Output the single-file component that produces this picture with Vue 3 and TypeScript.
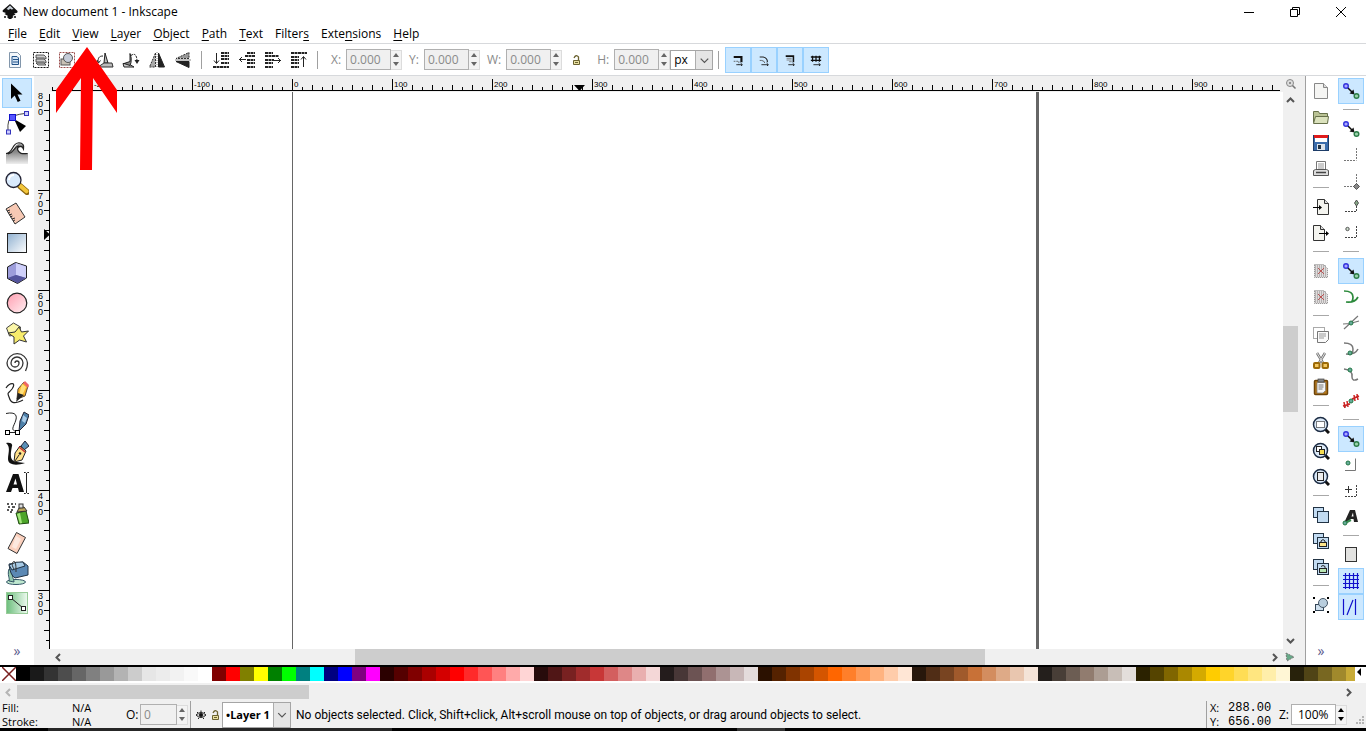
<script setup lang="ts">
import { computed, onBeforeUnmount, onMounted, ref } from 'vue'

interface Item { name: string; svg: string; on?: boolean }
type Entry = Item | null

const menus: [string, string, string][] = [
  ['', 'F', 'ile'], ['', 'E', 'dit'], ['', 'V', 'iew'], ['', 'L', 'ayer'], ['', 'O', 'bject'],
  ['', 'P', 'ath'], ['', 'T', 'ext'], ['Filter', 's', ''], ['Exte', 'n', 'sions'], ['', 'H', 'elp'],
]

const bars = (rows: number[][]) => rows.map(([x, y, w]) => `<path d="M${x} ${y}h${w}" stroke="#222" stroke-width="2" stroke-dasharray="3 .5"/>`).join('')

const toolbar: Entry[] = [
  { name: 'Select all', svg: '<path d="M3.500 1.500h8l3 3v12h-11z" fill="#f4f8fc" stroke="#8296ab"/><path d="M6 5.500h5l1.500 1.500v6.500h-6.500z" fill="#d5e5f5" stroke="#235389"/><path d="M7 8.500h5M7 11h5" stroke="#235389"/>' },
  { name: 'Select all in all layers', svg: '<rect x="1.500" y="1.500" width="15" height="15" fill="none" stroke="#111" stroke-dasharray="2 1"/><path d="M4 4h8l2 2v2l-2-1h-8zM4 8h8l2 2v2l-2-1h-8zM4 12h8l2 2h-8z" fill="#ccc" stroke="#333" stroke-width=".8"/>' },
  { name: 'Deselect', svg: '<rect x="1.500" y="1.500" width="15" height="15" fill="none" stroke="#9b4d4d" stroke-dasharray="2 1"/><rect x="3" y="8" width="9" height="6" fill="#c8c1b6" stroke="#555"/><circle cx="10" cy="7" r="4.500" fill="#c5ccd9" stroke="#555"/>' },
  null,
  { name: 'Rotate left', svg: '<path d="M8 12l1-10 3 10z" fill="#bbb" stroke="#222"/><path d="M2 16l6-4h8l1 4z" fill="#bbb" stroke="#333"/><path d="M2 11c0-4 1-6 5-6M1 9l1.500 3 2-2.500" fill="none" stroke="#222"/>' },
  { name: 'Rotate right', svg: '<path d="M1 12.500h5l6 3.500h-10z" fill="#ccc" stroke="#222"/><path d="M2 12.500l6-2v-8q2 5 1 9l-1 3z" fill="#888" stroke="#222"/><path d="M9 4.500c4-3 6 0 6 6" fill="none" stroke="#222" stroke-dasharray="2 1"/><path d="M12.500 9l2.500 4 2.500-4z" fill="#222"/>' },
  { name: 'Flip horizontal', svg: '<path d="M7.500 2v14h-6z" fill="#aaa" stroke="#333" stroke-dasharray="2 1"/><path d="M10.500 2v14h6z" fill="#222" stroke="#222"/><path d="M9 1v16" stroke="#888" stroke-dasharray="1 1"/>' },
  { name: 'Flip vertical', svg: '<path d="M15 1.500v6h-13z" fill="#999" stroke="#333" stroke-dasharray="2 1"/><path d="M15 16.500v-6h-13z" fill="#222" stroke="#222"/><path d="M1 9h16" stroke="#888"/>' },
  null,
  { name: 'Lower to bottom', svg: bars([[9, 2, 8], [9, 5, 8], [9, 8, 8], [9, 12, 8], [1, 16, 16]]) + '<path d="M4.500 2v10M2 9.500l2.500 3 2.500-3" fill="none" stroke="#222"/>' },
  { name: 'Lower', svg: bars([[9, 2, 8], [7, 5, 10], [9, 9, 8], [9, 12, 8], [9, 16, 8]]) + '<path d="M1 8.500h7M4 6l-2.500 2.500 2.500 2.500" fill="none" stroke="#222"/>' },
  { name: 'Raise', svg: bars([[1, 2, 8], [1, 5, 14], [1, 9, 9], [1, 12, 8], [1, 16, 8]]) + '<path d="M10 9.500h7M14 7l2.500 2.500-2.500 2.500" fill="none" stroke="#222"/>' },
  { name: 'Raise to top', svg: bars([[1, 2, 16], [1, 6, 8], [1, 9, 8], [1, 12, 8], [1, 16, 8]]) + '<path d="M13.500 16v-10M11 8.500l2.500-3 2.500 3" fill="none" stroke="#222"/>' },
  null,
]

const affect: Item[] = [
  { name: 'Scale stroke width', svg: '<path d="M2 3.500h9v6" fill="none" stroke="#111" stroke-width="2.500"/><path d="M2 8.500h6v4" fill="none" stroke="#555" stroke-dasharray="2 1"/><path d="M5 12.500h7M10 10.500l2 2-2 2" fill="none" stroke="#111"/>' },
  { name: 'Scale rounded corners', svg: '<path d="M2 3.500h4q5 1 5 6" fill="none" stroke="#222" stroke-width="1.300"/><path d="M2 7.500h2q3 0 4 3" fill="none" stroke="#555"/><path d="M4 12.500h8M10 10.500l2 2-2 2" fill="none" stroke="#111"/>' },
  { name: 'Move gradients', svg: '<path d="M2 2.500h9v7" fill="none" stroke="#111" stroke-width="1.800"/><path d="M3 5h6M3 7h6M6 9h3" stroke="#777"/><path d="M5 12.500h7M10 10.500l2 2-2 2" fill="none" stroke="#111"/>' },
  { name: 'Move patterns', svg: '<path d="M1 3.500h12M1 7.500h12" stroke="#111" stroke-width="1.500"/><path d="M3 2v7M7 2v7M11 2v7" stroke="#111" stroke-width="1.500"/><path d="M4 12.500h8M10 10.500l2 2-2 2" fill="none" stroke="#111"/>' },
]

const tools: Item[] = [
  { name: 'Select', on: true, svg: '<path d="M6 2.500v15.500l3.700-3.500 3 6.500 2.800-1.300-3-6.300h5z" fill="#000"/>' },
  { name: 'Edit paths by nodes', svg: '<path d="M3 20q-1-13 5-15t15-3" fill="none" stroke="#444"/><path d="M9 8l6 13 6-6z" fill="#000"/><rect x="4.500" y="3.500" width="6" height="6" fill="#55f" stroke="#11c"/><rect x="1.500" y="19" width="4" height="4" fill="#ccf" stroke="#33b"/><rect x="19.500" y="0.500" width="4" height="4" fill="#ccf" stroke="#33b"/>' },
  { name: 'Tweak objects', svg: '<defs><linearGradient id="wv" x2="0" y2="1"><stop offset=".4" stop-color="#888"/><stop offset="1" stop-color="#eee"/></linearGradient></defs><path d="M1 12h5c3-2 3-8 8-9 5 0 6 3 4 5-1-3-6-2-5 1 0 3 4 4 10 3v11h-22z" fill="url(#wv)"/><path d="M1 12.500c7 0 6-10 12-10.500 5-.5 6.500 3 5.500 6-1-4-6-3-6 0 1 5 5 5 10 4.500M3 13c6-1 6-8 11-8" fill="none" stroke="#222" stroke-width="1.200"/>' },
  { name: 'Zoom', svg: '<path d="M15 15l7 6" stroke="#8a6510" stroke-width="6" stroke-linecap="round"/><path d="M15.500 15l6 5.300" stroke="#f3c63b" stroke-width="4" stroke-linecap="round"/><circle cx="8.500" cy="9" r="7.500" fill="#d9eafc" stroke="#223" stroke-width="1.300"/><path d="M4 9a5 5 0 0 1 5-5" fill="none" stroke="#fff" stroke-width="2"/>' },
  { name: 'Measure', svg: '<path d="M1 8l10-6 9 14-10 7z" fill="#f7c9b4" stroke="#333"/><path d="M2 10l3-1M3 12l2-1M4 14l3-1M5.500 16l2-1M7 18l3-1M8 20l2-1" stroke="#333"/>' },
  { name: 'Rectangle', svg: '<defs><linearGradient id="rc" x2="1" y2="1"><stop stop-color="#8fb0d0"/><stop offset="1" stop-color="#fff"/></linearGradient></defs><rect x="2.500" y="2.500" width="19" height="19" fill="url(#rc)" stroke="#222"/>' },
  { name: '3D box', svg: '<path d="M2.500 6l8-4.500 11 3.500v12l-9 5.500-10-5z" fill="#7272ba" stroke="#222"/><path d="M3 6.500l8-4.500v12l-8 3z" fill="#9d9ddb"/><path d="M11 2l10 3.500v11.500l-10-3z" fill="#cfd0fa"/><path d="M3 17l8-3 10 3-8.500 5z" fill="#54549d"/>' },
  { name: 'Ellipse', svg: '<defs><linearGradient id="el" x2="1" y2="1"><stop stop-color="#ff9db0"/><stop offset="1" stop-color="#fff0f2"/></linearGradient></defs><circle cx="12" cy="12" r="9.800" fill="url(#el)" stroke="#222" stroke-width="1.200"/>' },
  { name: 'Star', svg: '<path d="M1.500 7l7-5 7 4-1 7-10 2z" fill="#fbf6a8" stroke="#444"/><path d="M14 6l2.500 5 7-1-5 5 3 6-7-2-5.500 4v-7l-6-4 7-1z" fill="#f8ec6c" stroke="#333"/>' },
  { name: 'Spiral', svg: '<path d="M10 12a2 2 0 0 1 4 0a4 4 0 0 1-8 0a6 6 0 0 1 12 0a8 8 0 0 1-16 0a10.300 10.300 0 0 1 20.500 0q0 4-2 8" fill="none" stroke="#333" stroke-width="1.300"/>' },
  { name: 'Pencil', svg: '<path d="M1 7c4-6 11-6 6 1-4 5-5 3-3 8 2 7 6 7 14 3" fill="none" stroke="#222" stroke-width="1.200"/><path d="M13 8l6-7 4 4-3 10-8 3z" fill="#f9b52a" stroke="#543"/><path d="M17 3l4 3-4 9-3-1z" fill="#ffe07a"/><path d="M13 12l6 2-8 7z" fill="#222"/><path d="M18 2l2-2 4 4-1 3z" fill="#e66"/>' },
  { name: 'Bezier', svg: '<path d="M1 2.500c10-2 12 2 9 9s-4 8 4 9.500M3 21.500h9" fill="none" stroke="#222"/><path d="M15 10l4-9 5 3-3 9-7 7z" fill="#4d7fa8" stroke="#223"/><path d="M18 4l4 3-2 5-3-2z" fill="#a8cbe8"/><rect x=".5" y="19.500" width="4" height="4" fill="#fff" stroke="#000"/><rect x="10.500" y="19.500" width="4" height="4" fill="#fff" stroke="#000"/>' },
  { name: 'Calligraphy', svg: '<path d="M1 2c3-1 7 0 6 3-2 10-2 15 5 16l8 1c-9 3-17 2-17-4s3-12-2-16z" fill="#111"/><path d="M20 0l4 5-5 4-3-4z" fill="#5a90b8" stroke="#223"/><path d="M15 5l6 5-4 9-8 2 1-9z" fill="#ffe08a" stroke="#222"/><path d="M10 20l4-6" stroke="#222"/><circle cx="15" cy="12.500" r="1.300" fill="#222"/><path d="M14 6l6 5" stroke="#c33" stroke-width="1.500"/>' },
  { name: 'Text', svg: '<path d="M8 3h5.500l5.500 18h-5l-1-4h-5.500l-1.500 4h-5zM8.500 13.500h3.500l-1.500-6z" fill="#111"/><path d="M19 1.500h1.500l1 1 1-1h1.500M19 22.500h1.500l1-1 1 1h1.500M21.500 2v20" fill="none" stroke="#222"/>' },
  { name: 'Spray', svg: '<path d="M11 12l10-2 3 12-10 1z" fill="#4da52a" stroke="#1e4a10"/><path d="M12 13l3-1 2 10-2 .5z" fill="#a5e87d"/><path d="M12 11l2-4 5-1 3 4z" fill="#bda35a" stroke="#333"/><rect x="14" y="3" width="4" height="4" fill="#ddd" stroke="#333"/><path d="M2 3h2M6 3h2M3 6h2M7 6h3M2 9h2M6 9h2M10 3h1M5 11h2" stroke="#222" stroke-width="1.700"/>' },
  { name: 'Eraser', svg: '<path d="M11.500 1.500l9 5-8.500 16-9-5z" fill="#fbd0bd" stroke="#333"/><path d="M11 5l5 3-5 10-4-2z" fill="#fde8de"/>' },
  { name: 'Paint bucket', svg: '<ellipse cx="11" cy="21" rx="9.500" ry="2.500" fill="#bfe8cf" stroke="#356"/><path d="M4 8c-2 6 1 9 0 12l5 1c0-3-3-6-1-11z" fill="#93c8ad" stroke="#356"/><path d="M4 3l14-2 5 4v9l-13 3q-5-3-6-14z" fill="#5b88b4" stroke="#234"/><path d="M4 4q7-4 14-3l2 4-13 4z" fill="#a8cbe6" stroke="#234"/><path d="M9 8c-4-6 0-9 1-7s1 6 1 10" fill="none" stroke="#333"/>' },
  { name: 'Gradient', svg: '<defs><linearGradient id="gr" x2="1"><stop stop-color="#6cbe7c"/><stop offset="1" stop-color="#eefaf0"/></linearGradient></defs><rect x="1.500" y="1.500" width="21" height="21" fill="url(#gr)" stroke="#9c9"/><path d="M6 7l12 10" stroke="#222"/><rect x="3.500" y="4.500" width="4" height="4" fill="#fff" stroke="#222"/><rect x="16.500" y="15.500" width="4" height="4" fill="#fff" stroke="#222"/>' },
]

const lens = (inner: string) => `<path d="M13 13l4 4" stroke="#111" stroke-width="3"/><circle cx="8.500" cy="8.500" r="7" fill="#dbe9f8" stroke="#1c2c44" stroke-width="1.500"/>${inner}`
const pair = (inner: string) => `<rect x="1.500" y="1.500" width="10" height="10" fill="#c3dcf3" stroke="#234"/><rect x="5.500" y="5.500" width="11" height="11" fill="#c2dbf1" stroke="#234"/>${inner}`
const greyed = '<path d="M2.500 2.500h9l4 4v9h-13z" fill="#e0dcdc" stroke="#888" stroke-dasharray="1 1"/><path d="M3 4h11M3 6h12M3 8h12M3 10h12M3 12h12M3 14h12" stroke="#888" stroke-dasharray="1 1"/><path d="M6 6l6 6M12 6l-6 6" stroke="#b55"/>'

const commands: Entry[] = [
  { name: 'New', svg: '<path d="M2.500 1.500h9l4 4v11h-13z" fill="#f5f5f3" stroke="#888"/><path d="M11.500 1.500v4h4" fill="#ddd" stroke="#888"/>' },
  { name: 'Open', svg: '<path d="M1.500 14.500v-11h5l1 2h8v9z" fill="#b9c294" stroke="#66704a"/><path d="M1.500 15.500l2-7h13l-1 7z" fill="#dbe2bd" stroke="#66704a"/>' },
  { name: 'Save', svg: '<rect x="1.500" y="1.500" width="15" height="15" fill="#3b6cab" stroke="#1d3c68"/><rect x="3" y="2" width="12" height="6" fill="#fff"/><rect x="2" y="1" width="14" height="3" fill="#e01b1b"/><rect x="5" y="10" width="8" height="6" fill="#dde3ea"/><rect x="6" y="11" width="3" height="4" fill="#234"/>' },
  { name: 'Print', svg: '<path d="M4.500 9.500v-8h9v8" fill="#fff" stroke="#777"/><path d="M6 4h6M6 6h6M6 8h6" stroke="#999"/><path d="M1.500 10.500l2-1h11l2 1v5h-15z" fill="#ddd" stroke="#555"/><path d="M4 12.500h10" stroke="#444" stroke-width="1.500"/>' },
  null,
  { name: 'Import', svg: '<path d="M5.500 1.500h7l4 4v11h-11z" fill="#f4f4ef" stroke="#333"/><path d="M12.500 1.500v4h4" fill="#ddd" stroke="#333"/><path d="M1 9.500h8" stroke="#000"/><path d="M7 7l3 2.500-3 2.500z" fill="#000"/>' },
  { name: 'Export', svg: '<path d="M1.500 1.500h7l4 4v11h-11z" fill="#f4f4ef" stroke="#333"/><path d="M8.500 1.500v4h4" fill="#ddd" stroke="#333"/><path d="M7 9.500h8" stroke="#000"/><path d="M14 7l3 2.500-3 2.500z" fill="#000"/>' },
  null,
  { name: 'Undo', svg: greyed },
  { name: 'Redo', svg: greyed },
  null,
  { name: 'Copy', svg: '<rect x="1.500" y="1.500" width="11" height="11" fill="#fff" stroke="#aaa"/><path d="M5.500 5.500h11v8l-3 3h-8z" fill="#fafafa" stroke="#777"/><path d="M7 8h7M7 10h7M7 12h5" stroke="#999"/>' },
  { name: 'Cut', svg: '<path d="M5 1l6 10M13 1l-6 10" stroke="#777" stroke-width="2.500"/><path d="M5 1l6 10M13 1l-6 10" stroke="#ddd"/><rect x="2" y="11" width="5.500" height="5" rx="1" fill="#f4c860" stroke="#9c6a08" stroke-width="2"/><rect x="10.500" y="11" width="5.500" height="5" rx="1" fill="#f4c860" stroke="#9c6a08" stroke-width="2"/>' },
  { name: 'Paste', svg: '<rect x="2.500" y="2.500" width="13" height="14" rx="1" fill="#b77a1e" stroke="#6d4308" stroke-width="1.500"/><path d="M5 4.500h8.500v8l-2.500 2.500h-6z" fill="#f6f6f6" stroke="#777" stroke-width=".7"/><rect x="6" y="1" width="6" height="3" fill="#888" stroke="#444" stroke-width=".7"/><path d="M6.500 7h5M6.500 9h5M6.500 11h4" stroke="#777"/>' },
  null,
  { name: 'Zoom selection', svg: lens('<rect x="4.500" y="5.500" width="8" height="6" fill="#fff" stroke="#000" stroke-dasharray="1 1"/>') },
  { name: 'Zoom drawing', svg: lens('<rect x="4.500" y="4.500" width="5" height="5" fill="#fff" stroke="#222"/><rect x="7.500" y="7.500" width="5" height="5" fill="#f4dc50" stroke="#222"/>') },
  { name: 'Zoom page', svg: lens('<rect x="5.500" y="4.500" width="6" height="8" fill="#eee" stroke="#222"/>') },
  null,
  { name: 'Duplicate', svg: pair('') },
  { name: 'Clone', svg: pair('<rect x="7.500" y="10.500" width="7" height="4" fill="#ffe68a" stroke="#222"/><path d="M9 10v-1q2-3 4 0v1" fill="none" stroke="#222"/>') },
  { name: 'Unlink clone', svg: pair('<rect x="7.500" y="10.500" width="7" height="4" fill="#b8e6b4" stroke="#222"/><path d="M9 8.500q2-2 4 0v2" fill="none" stroke="#222"/>') },
  null,
  { name: 'Group', svg: '<path d="M1 1h2v2h-2zM15 1h2v2h-2zM1 15h2v2h-2zM15 15h2v2h-2z" fill="#000"/><rect x="3.500" y="8.500" width="8" height="6" fill="#cfe0ee" stroke="#345"/><circle cx="11" cy="7" r="4.500" fill="#b9cede" stroke="#456"/>' },
]

const main = '<path d="M5 5l6 6" stroke="#111" stroke-width="1.500"/><path d="M12.500 12.500l-5-1 4-4z" fill="#111"/><circle cx="4" cy="4" r="2.300" fill="#aaf" stroke="#33d" stroke-width="1.400"/><circle cx="14.500" cy="14" r="2.300" fill="#9cd4ac" stroke="#2c7c48" stroke-width="1.400"/>'
const corner = '<path d="M2 14.500h12.500M14.500 2v12" fill="none" stroke="#777" stroke-dasharray="2 1"/>'
const dot = (x: number, y: number) => `<circle cx="${x}" cy="${y}" r="2" fill="#6a9" stroke="#274" stroke-width="1"/>`
const curve = '<path d="M2 3q9 1 8 8 0 5 6 2" fill="none" stroke="#777" stroke-width="1.500"/>'

const snaps: Entry[] = [
  { name: 'Enable snapping', on: true, svg: main },
  null,
  { name: 'Snap bounding boxes', svg: main },
  { name: 'Snap to edges', svg: corner },
  { name: 'Snap to corners', svg: corner + '<path d="M14.500 11.500l3 3-3 3-3-3z" fill="#888" stroke="#555"/>' },
  { name: 'Snap edge midpoints', svg: '<path d="M3 13.500h11.500v-12" fill="none" stroke="#444" stroke-dasharray="2 1"/><path d="M14.500 2l2 3-2 3-2-3z" fill="#8a8" stroke="#555"/>' },
  { name: 'Snap centers', svg: '<path d="M3 13.500h11.500v-12" fill="none" stroke="#444" stroke-dasharray="2 1"/><circle cx="5.500" cy="5" r="1.700" fill="#cdc" stroke="#555"/>' },
  null,
  { name: 'Snap nodes', on: true, svg: main },
  { name: 'Snap to paths', svg: '<path d="M2 3q9 0 9 6t-4 5M4 14q9 1 12-5" fill="none" stroke="#2c8a3c" stroke-width="1.700"/>' },
  { name: 'Snap intersections', svg: '<path d="M2 15l14-13M1 10q8 0 16-3" fill="none" stroke="#777" stroke-width="1.200"/>' + dot(9, 9) },
  { name: 'Snap cusp nodes', svg: '<path d="M2 3q9 0 9 6t-4 5M4 14q9 1 12-5" fill="none" stroke="#777" stroke-width="1.500"/>' + dot(8, 13) },
  { name: 'Snap smooth nodes', svg: curve + dot(8, 4) },
  { name: 'Snap line midpoints', svg: '<path d="M2 16l14-13" stroke="#777"/><path d="M2 10l1 6M5 9l1 6M12 3l1 6M15 2l1 6M1 14l7-2M10 7l7-3" stroke="#c22" stroke-width="1.500"/>' + dot(9, 9) },
  null,
  { name: 'Snap other points', on: true, svg: main },
  { name: 'Snap object centers', svg: '<path d="M3 14.500h10.500v-12" fill="none" stroke="#777"/>' + dot(6, 7) },
  { name: 'Snap rotation centers', svg: '<path d="M3 14.500h11.500v-12" fill="none" stroke="#444" stroke-dasharray="2 1"/><path d="M6.500 4v7M3 7.500h7" stroke="#333"/>' },
  { name: 'Snap text baseline', svg: '<path d="M8 2h5l3 12h-4l-.5-3h-3l-2 3h-4zM9.500 8.500h2l-.5-4z" fill="#222"/><path d="M3 15l6-3" stroke="#3a8a50" stroke-width="2"/>' + dot(3, 15) },
  null,
  { name: 'Snap page border', svg: '<rect x="3.500" y="1.500" width="11" height="14" fill="#e2e2e0" stroke="#333"/>' },
  { name: 'Snap to grids', on: true, svg: '<path d="M1 3.500h16M1 7.500h16M1 11.500h16M1 15.500h16M3.500 1v16M7.500 1v16M11.500 1v16M15.500 1v16" stroke="#11c" stroke-width="1.200"/>' },
  { name: 'Snap guides', on: true, svg: '<path d="M1.500 1v16M13.500 1v16M5 17l6-15" stroke="#11c" stroke-width="1.200"/>' },
]

const palette = (
  '000000 1a1a1a 333333 4d4d4d 666666 808080 999999 b3b3b3 cccccc e6e6e6 ececec f2f2f2 f9f9f9 ffffff ' +
  '800000 ff0000 808000 ffff00 008000 00ff00 008080 00ffff 000080 0000ff 800080 ff00ff ' +
  '2b0000 550000 800000 aa0000 d40000 ff0000 ff2a2a ff5555 ff8080 ffaaaa ffd5d5 ' +
  '280b0b 501616 782121 a02c2c c83737 d35f5f de8787 e9afaf f4d7d7 ' +
  '241c1c 483737 6c5353 916f6f ac9393 c8b7b7 e3dbdb ' +
  '2b1100 552200 803300 aa4400 d45500 ff6600 ff7f2a ff9955 ffb380 ffccaa ffe6d5 ' +
  '28170b 502d16 784421 a05a2c c87137 d38d5f deaa87 e9c6af f4e3d7 ' +
  '241f1c 483e37 6c5d53 917c6f ac9d93 c8beb7 e3dedb ' +
  '2b2200 554400 806600 aa8800 d4aa00 ffcc00 ffd42a ffdd55 ffe680 ffeeaa fff6d5 ' +
  '28220b 504416 786721 a0892c c8ab37'
).split(' ')

const ORIGIN_X = 242
const ORIGIN_Y = 798
const winW = ref(window.innerWidth)
const winH = ref(window.innerHeight)
const measure = () => {
  winW.value = window.innerWidth
  winH.value = window.innerHeight
}
onMounted(() => window.addEventListener('resize', measure))
onBeforeUnmount(() => window.removeEventListener('resize', measure))

const range = (from: number, to: number) => Array.from({ length: Math.max(0, Math.floor((to - from) / 10) + 1) }, (_, i) => from + i * 10)
const hTicks = computed(() => range(-230, winW.value - 136 - ORIGIN_X))
const vTicks = computed(() => range(0, winH.value - 180).map((d) => 800 - d).filter((v) => ORIGIN_Y - v < winH.value - 180))
const tick = (v: number) => (v % 100 === 0 ? 11 : v % 20 === 0 ? 5 : 3)
const digits = (v: number) => String(Math.abs(v)).split('')

const coords = ref([
  { label: 'X:', value: '0.000' }, { label: 'Y:', value: '0.000' },
  { label: 'W:', value: '0.000' }, { label: 'H:', value: '0.000' },
])
const opacity = ref('0')
const zoom = ref('100%')
const lock = '<path d="M3.500 6.500h6v4h-6z" fill="#e8dfa0" stroke="#6b6230"/><path d="M4 4q2-4 4.500-1v3" fill="none" stroke="#6b6230" stroke-width="1.300"/><path d="M5 8.500h3" stroke="#6b6230"/>'
</script>

<template>
  <div class="window">
    <header class="titlebar">
      <svg class="logo" width="16" height="16" viewBox="0 0 16 16">
        <path d="M8 0l7.500 7q.5 1.500-1 2l-2.500.5 1.500 1-3 1.500 1 1-2.500 2h-2l-2-2 1-1-3.500-2 1.500-1-3-1q-1-1 0-2z" fill="#111" />
        <path d="M8 1.500l3.500 3.500-2 .5-1.500-1-1 1.500-2.500-1z" fill="#ccd4dc" />
        <path d="M2 13h2M12 13h2" stroke="#111" stroke-width="1.500" />
      </svg>
      <h1>New document 1 - Inkscape</h1>
      <div class="winbtns">
        <button type="button" aria-label="Minimize"><svg width="12" height="12"><path d="M1 6.500h10" stroke="#000" /></svg></button>
        <button type="button" aria-label="Restore"><svg width="12" height="12"><path d="M1.500 3.500h7v7h-7zM3.500 3v-1.500h7v7h-2" fill="none" stroke="#000" /></svg></button>
        <button type="button" aria-label="Close"><svg width="12" height="12"><path d="M1 1l10 10M11 1l-10 10" stroke="#000" /></svg></button>
      </div>
    </header>

    <nav class="menubar">
      <button v-for="m in menus" :key="m.join('')" type="button">{{ m[0] }}<u>{{ m[1] }}</u>{{ m[2] }}</button>
    </nav>

    <div class="toolbar">
      <template v-for="(t, i) in toolbar" :key="i">
        <button v-if="t" type="button" class="cell" :aria-label="t.name"><svg width="18" height="18" viewBox="0 0 18 18" v-html="t.svg" /></button>
        <span v-else class="vsep" />
      </template>
      <template v-for="(c, i) in coords" :key="c.label">
        <svg v-if="i === 3" class="lock" width="13" height="12" viewBox="0 0 13 12" v-html="lock" />
        <label class="field">
          <span>{{ c.label }}</span>
          <input v-model="c.value" disabled>
          <i class="spin"><b class="up" /><b class="down" /></i>
        </label>
      </template>
      <span class="drop unit">
        <select aria-label="Unit"><option>px</option></select>
        <svg width="17" height="18" viewBox="0 0 17 18"><path d="M5 7.500l4 4 4-4" fill="none" stroke="#555" stroke-width="1.300" /></svg>
      </span>
      <span class="vsep" />
      <button v-for="a in affect" :key="a.name" type="button" class="cell on" :aria-label="a.name"><svg width="12" height="12" viewBox="0 0 14 14" v-html="a.svg" /></button>
    </div>

    <main class="body">
      <aside class="tools">
        <button v-for="t in tools" :key="t.name" type="button" :class="{ on: t.on }" :aria-label="t.name"><svg width="24" height="24" viewBox="0 0 24 24" v-html="t.svg" /></button>
        <button type="button" class="more" aria-label="More tools">»</button>
      </aside>

      <section class="work">
        <div class="corner" />
        <svg class="hruler">
          <path d="M2.500 11v4" stroke="#000" />
          <line x1="2" y1="14.500" x2="100%" y2="14.500" stroke="#000" />
          <g v-for="v in hTicks" :key="v">
            <line :x1="ORIGIN_X + v + 0.5" :x2="ORIGIN_X + v + 0.5" :y1="14 - tick(v)" y2="14" stroke="#000" />
            <text v-if="v % 100 === 0" :x="ORIGIN_X + v + 2" y="11">{{ v }}</text>
          </g>
          <path d="M524 9h11l-5.500 6z" fill="#000" />
        </svg>
        <div class="zoomfit"><svg width="12" height="12" viewBox="0 0 12 12"><circle cx="5" cy="5" r="3.500" fill="#ddd" stroke="#888" /><path d="M4 5h2M7.500 7.500l3 3" stroke="#777" stroke-width="1.500" /></svg></div>

        <svg class="vruler">
          <line x1="15.500" y1="2" x2="15.500" y2="100%" stroke="#000" />
          <g v-for="v in vTicks" :key="v">
            <line v-if="v < 800" :x1="15 - tick(v)" x2="15" :y1="ORIGIN_Y - v + 0.5" :y2="ORIGIN_Y - v + 0.5" stroke="#000" />
            <template v-if="v % 100 === 0">
              <text v-for="(d, i) in digits(v)" :key="i" x="4" :y="ORIGIN_Y - v + 9 + i * 8">{{ d }}</text>
            </template>
          </g>
          <path d="M10 137v11l6-5.500z" fill="#000" />
        </svg>
        <div class="canvas"><div class="page" /></div>
        <div class="vscroll">
          <svg width="9" height="6"><path d="M1 5l3.500-3.500 3.500 3.500" /></svg>
          <div class="track"><span /></div>
          <svg width="9" height="6"><path d="M1 1l3.500 3.500 3.500-3.500" /></svg>
        </div>

        <div class="corner" />
        <div class="hscroll">
          <svg width="6" height="9"><path d="M5 1l-3.500 3.500 3.500 3.500" /></svg>
          <div class="track"><span /></div>
          <svg width="6" height="9"><path d="M1 1l3.500 3.500-3.500 3.500" /></svg>
        </div>
        <div class="cms"><svg width="10" height="10"><path d="M1 1l8 4-7 4z" fill="#6a8" stroke="#777" stroke-dasharray="2 1" /></svg></div>
      </section>

      <aside class="side">
        <div class="col">
          <template v-for="(c, i) in commands" :key="i">
            <button v-if="c" type="button" class="cell" :aria-label="c.name"><svg width="18" height="18" viewBox="0 0 18 18" v-html="c.svg" /></button>
            <span v-else class="hsep" />
          </template>
          <button type="button" class="more" aria-label="More commands">»</button>
        </div>
        <div class="col">
          <template v-for="(c, i) in snaps" :key="i">
            <button v-if="c" type="button" class="cell" :class="{ on: c.on }" :aria-label="c.name"><svg width="18" height="18" viewBox="0 0 18 18" v-html="c.svg" /></button>
            <span v-else class="hsep" />
          </template>
        </div>
      </aside>
    </main>

    <div class="palette">
      <button type="button" class="none" aria-label="None"><svg width="14" height="14"><path d="M0 0l14 14M14 0l-14 14" stroke="#7a1f1f" stroke-width="1.500" /></svg></button>
      <div class="swatches"><button v-for="(c, i) in palette" :key="i" type="button" :aria-label="'#' + c" :style="{ background: '#' + c }" /></div>
      <button type="button" class="palmenu" aria-label="Palette menu"><svg width="6" height="10"><path d="M5 1v8l-4-4z" fill="#000" /></svg></button>
    </div>
    <div class="palscroll">
      <svg class="dim" width="6" height="9"><path d="M5 1l-3.500 3.500 3.500 3.500" /></svg>
      <div class="track"><span /></div>
      <svg width="6" height="9"><path d="M1 1l3.500 3.500-3.500 3.500" /></svg>
    </div>

    <footer class="status">
      <dl class="style">
        <dt>Fill:</dt><dd>N/A</dd>
        <dt>Stroke:</dt><dd>N/A</dd>
      </dl>
      <label class="field opacity">
        <span>O:</span>
        <input v-model="opacity" disabled>
        <i class="spin"><b class="up" /><b class="down" /></i>
      </label>
      <span class="bar" />
      <svg class="eye" width="12" height="10" viewBox="0 0 12 10"><path d="M1 5q5-5 10 0-5 5-10 0z" fill="#ccc" stroke="#222" /><circle cx="6" cy="5" r="2" fill="#111" /><path d="M2 2l1 1M6 .5v2M10 2l-1 1M3 9l1-1M9 9l-1-1" stroke="#222" /></svg>
      <svg class="lock" width="13" height="12" viewBox="0 0 13 12" v-html="lock" />
      <span class="drop layer">
        <select aria-label="Layer"><option>•Layer 1</option></select>
        <svg width="17" height="24" viewBox="0 0 17 24"><path d="M4.500 10l4 4 4-4" fill="none" stroke="#555" stroke-width="1.300" /></svg>
      </span>
      <p class="message">No objects selected. Click, Shift+click, Alt+scroll mouse on top of objects, or drag around objects to select.</p>
      <dl class="pos">
        <dt>X:</dt><dd>288.00</dd>
        <dt>Y:</dt><dd>656.00</dd>
      </dl>
      <label class="field zoom">
        <span>Z:</span>
        <input v-model="zoom">
        <i class="spin"><b class="up" /><b class="down" /></i>
      </label>
      <svg class="grip" width="10" height="10"><path d="M7 1h2M4 4h2M7 4h2M1 7h2M4 7h2M7 7h2" stroke="#b5b5b5" stroke-width="2" /></svg>
    </footer>
    <div class="taskbar"><span /><span /></div>

    <svg class="arrow" width="64" height="126" viewBox="0 0 64 126"><path d="M32 0l30 43v23l-24-35-1 92h-12l1-92-25 35v-23z" fill="#f00" /></svg>
  </div>
</template>

<style>
html, body, #app { height: 100%; }
body { margin: 0; overflow: hidden; }
</style>

<style scoped>
* { box-sizing: border-box; }
.window { position: relative; height: 100%; display: flex; flex-direction: column; background: #fff; color: #000; font: 12px/16px "Open Sans", "Noto Sans", sans-serif; }
button { border: 0; padding: 0; margin: 0; background: none; font: inherit; color: inherit; display: flex; align-items: center; justify-content: center; flex: none; }
svg { display: block; flex: none; }
h1, p, dl, dd { margin: 0; }

.titlebar { display: flex; align-items: center; height: 23px; padding-left: 2px; flex: none; }
.titlebar h1 { font-size: 12px; font-weight: 400; margin-left: 5px; flex: 1; }
.winbtns { display: flex; padding-right: 2px; }
.winbtns button { width: 46px; height: 22px; }

.menubar { display: flex; height: 21px; padding: 2px 0 0 2px; border-bottom: 1px solid #d7d9dc; flex: none; }
.menubar button { display: block; padding: 0 6px; white-space: pre; }
.menubar u { text-underline-offset: 2px; }

.toolbar { display: flex; align-items: center; height: 32px; padding-left: 2px; border-bottom: 1px solid #d7d9dc; flex: none; }
.cell { width: 26px; height: 26px; border: 1px solid transparent; }
.cell.on, .tools .on { background: #cce8ff; border: 1px solid #99d1ff; }
.vsep { width: 12px; height: 18px; flex: none; background: linear-gradient(#a0a0a0, #a0a0a0) 5px 0 / 1px 100% no-repeat; }
.field { display: flex; align-items: center; flex: none; color: #8a8a8a; margin-left: 7px; }
.field span { padding-right: 5px; white-space: nowrap; }
.field input { width: 45px; height: 21px; padding: 0 3px; border: 1px solid #b0b0b0; background: #f0f0f0; font: inherit; color: #8a8a8a; border-radius: 0; outline: 0; }
.toolbar .lock { margin: 0 7px 0 8px; }
.spin { width: 11px; height: 20px; display: flex; flex-direction: column; align-items: center; justify-content: space-around; border: 1px solid #dcdcdc; border-left: 0; background: #f3f3f3; }
.spin b { border: 3px solid transparent; }
.spin .up { border-top: 0; border-bottom: 4px solid #666; }
.spin .down { border-bottom: 0; border-top: 4px solid #666; }
.drop { display: flex; border: 1px solid #a5a5a5; background: #fff; flex: none; }
.drop select { appearance: none; border: 0; outline: 0; background: #fff; flex: 1; min-width: 0; padding: 0 3px; font: inherit; color: #000; }
.drop svg { background: #e5e5e5; border-left: 1px solid #adadad; }
.unit { width: 43px; height: 20px; }

.body { flex: 1; min-height: 0; display: grid; grid-template-columns: 34px 1fr 60px; }
.tools { padding: 2px 2px 0; display: flex; flex-direction: column; }
.tools button { height: 30px; border: 1px solid transparent; }
.more { color: #5a5a8c; font-size: 14px; }
.tools .more { margin-top: auto; height: 28px; }
.work { display: grid; grid-template: 16px 1fr 16px / 16px 1fr 22px; background: #f0f0f0; min-width: 0; min-height: 0; border-right: 1px solid #a0a0a0; }
.hruler, .vruler { width: 100%; height: 100%; min-width: 0; min-height: 0; overflow: hidden; font: 8px "Liberation Sans", sans-serif; }
.vruler { font-size: 9px; }
.hruler { border-right: 3px solid #f0f0f0; }
.canvas { position: relative; background: #fff; overflow: hidden; }
.page { position: absolute; left: 242px; top: 0; width: 747px; height: 1054px; border: solid #666; border-width: 0 3px 0 1px; }
.zoomfit, .cms { display: flex; align-items: center; padding-left: 2px; }
.vscroll { display: flex; flex-direction: column; align-items: center; width: 15px; padding: 5px 0; }
.hscroll { display: flex; align-items: center; padding: 0 5px; background: #f0f0f0; }
.track { flex: 1; display: flex; }
.vscroll .track { width: 15px; flex-direction: column; }
.vscroll .track span { height: 16%; margin-top: 223px; background: #cdcdcd; }
.hscroll .track { height: 100%; }
.hscroll .track span { width: 52%; margin-left: 294px; background: #cdcdcd; }
.vscroll path, .hscroll path, .palscroll path { fill: none; stroke: #555; stroke-width: 2; }

.side { display: flex; justify-content: space-between; padding: 2px 2px 0; }
.col { display: flex; flex-direction: column; }
.hsep { height: 12px; background: linear-gradient(#a8a8a8, #a8a8a8) 5px 5px / 16px 1px no-repeat; }
.col .more { margin-top: auto; height: 28px; }

.palette { display: flex; height: 18px; padding: 0 3px 0 2px; border-top: 2px solid #000; background: #fff; flex: none; }
.none { width: 14px; height: 14px; }
.swatches { flex: 1; display: flex; height: 14px; overflow: hidden; }
.swatches button { width: 14px; }
.palmenu { width: 8px; height: 10px; }
.palscroll { display: flex; align-items: center; height: 18px; padding: 0 14px 0 5px; background: #f0f0f0; flex: none; }
.palscroll .dim path { stroke: #b5b5b5; }
.palscroll .track { height: 14px; margin-left: 6px; }
.palscroll .track span { width: 22%; background: #cdcdcd; }

.status { display: flex; align-items: center; height: 27px; background: #f0f0f0; padding-right: 1px; flex: none; }
.style { display: grid; grid-template-columns: 70px 46px; padding-left: 2px; line-height: 14px; font-size: 11px; }
.opacity { margin-left: 8px; }
.opacity span { width: 14px; padding: 0; color: #000; }
.opacity input { width: 37px; }
.bar { width: 1px; height: 27px; background: #a0a0a0; margin: 0 4px 0 2px; }
.eye { margin-right: 2px; }
.layer { width: 69px; height: 26px; margin-right: 5px; font-size: 11px; font-weight: 700; }
.message { flex: 1; min-width: 0; white-space: nowrap; font-family: Roboto, "Open Sans", sans-serif; }
.pos { display: grid; grid-template-columns: 18px 46px; padding-left: 3px; border-left: 1px solid #a0a0a0; line-height: 14px; font-size: 11px; }
.pos dd { font: 12px/14px "Liberation Mono", monospace; }
.zoom { margin-left: 5px; }
.zoom span { width: 12px; padding: 0; color: #000; }
.zoom input { background: #fff; color: #000; padding: 0 6px; }
.zoom .spin b.up { border-bottom-color: #000; }
.zoom .spin b.down { border-top-color: #000; }
.grip { margin: 12px 0 0 8px; }
.taskbar { display: flex; justify-content: space-between; height: 3px; background: #000; padding: 0 581px 0 48px; flex: none; }
.taskbar span { width: 344px; background: #262626; }
.taskbar span + span { width: 48px; background: #333; }

.arrow { position: absolute; left: 55px; top: 47px; pointer-events: none; }
</style>
